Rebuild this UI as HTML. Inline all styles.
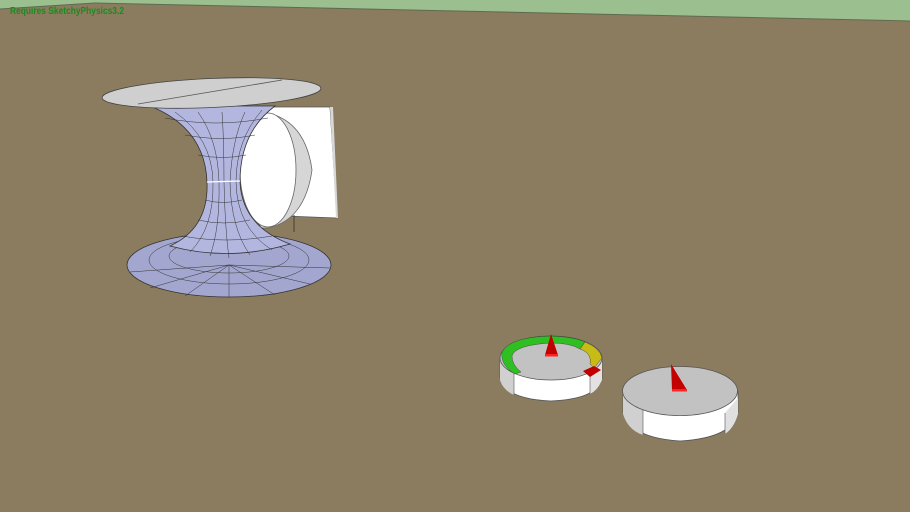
<!DOCTYPE html>
<html><head><meta charset="utf-8"><style>
html,body{margin:0;padding:0;width:910px;height:512px;overflow:hidden;background:#8b7c5f}
svg{display:block}
</style></head><body>
<svg width="910" height="512" viewBox="0 0 910 512" xmlns="http://www.w3.org/2000/svg">
<rect width="910" height="512" fill="#8b7c5f"/>
<polygon points="0,0 910,0 910,21 95,3 0,9" fill="#9bbf8f"/>
<polyline points="0,9 95,3 910,21" fill="none" stroke="#5e6b50" stroke-width="1"/>
<text x="10" y="14" font-family="Liberation Sans, sans-serif" font-weight="bold" font-size="10" fill="#1d8a1d" textLength="114" lengthAdjust="spacingAndGlyphs">Requires SketchyPhysics3.2</text>

<!-- panel -->
<polygon points="262,107 330,107 337,218 285,216" fill="#ffffff" stroke="#555" stroke-width="0.8"/>
<polygon points="330,107 333,107 338,218 336,218" fill="#d8d8d8"/>
<line x1="294" y1="215" x2="294" y2="232" stroke="#4a4030" stroke-width="1"/>
<!-- disc rim -->
<path d="M262,112 Q305,118 312,170 Q305,220 268,228 L260,228 L262,112 Z" fill="#d6d6d6" stroke="#666" stroke-width="0.8"/>
<ellipse cx="268" cy="170" rx="28" ry="57" fill="#ffffff" stroke="#666" stroke-width="0.8"/>

<!-- base -->
<ellipse cx="229" cy="265" rx="102" ry="32" fill="#a3a7cf" stroke="#333" stroke-width="0.8"/>
<ellipse cx="229" cy="260" rx="80" ry="24" fill="none" stroke="#333" stroke-width="0.5"/>
<ellipse cx="229" cy="256" rx="60" ry="17" fill="none" stroke="#333" stroke-width="0.5"/>
<g stroke="#333" stroke-width="0.5">
<line x1="229" y1="265" x2="130" y2="272"/><line x1="229" y1="265" x2="150" y2="288"/><line x1="229" y1="265" x2="185" y2="296"/>
<line x1="229" y1="265" x2="229" y2="297"/><line x1="229" y1="265" x2="275" y2="295"/><line x1="229" y1="265" x2="310" y2="284"/><line x1="229" y1="265" x2="330" y2="268"/>
</g>
<!-- body -->
<path d="M150,106 Q205,128 207,182 Q209,228 170,246 Q229,262 290,244 Q242,226 240,182 Q240,132 275,106 Z" fill="#b3b7e0" stroke="#333" stroke-width="0.8"/>
<g stroke="#333" stroke-width="0.5" fill="none">
<path d="M175,112 Q212,138 213,182 Q214,228 190,252"/>
<path d="M198,112 Q218,140 219,182 Q220,228 210,256"/>
<path d="M222,112 Q224,140 224,182 Q225,228 229,258"/>
<path d="M245,112 Q232,140 230,182 Q231,228 250,255"/>
<path d="M262,110 Q236,140 236,182 Q237,228 272,250"/>
<path d="M165,118 Q215,128 268,118"/>
<path d="M185,135 Q222,142 255,135"/>
<path d="M198,155 Q223,160 246,155"/>
<path d="M205,200 Q223,205 242,200"/>
<path d="M198,220 Q224,226 250,220"/>
<path d="M182,236 Q226,244 272,236"/>
</g>
<line x1="207" y1="182" x2="240" y2="181" stroke="#fff" stroke-width="1.2"/>
<!-- top disc -->
<ellipse cx="211.5" cy="93" rx="109.5" ry="14.5" transform="rotate(-2.5 211.5 93)" fill="#cfcfcf" stroke="#444" stroke-width="0.8"/>
<line x1="138" y1="104" x2="282" y2="80" stroke="#555" stroke-width="0.8"/>

<!-- gauge 1 -->
<path d="M500,358 L500,378 Q505,399 551,401 Q598,399 602,378 L602,358 Z" fill="#ffffff" stroke="#555" stroke-width="0.8"/>
<path d="M500,360 L500,380 Q503,390 514,395 L514,374 Z" fill="#d0d0d0"/>
<path d="M602,360 L602,380 Q598,390 590,394 L590,374 Z" fill="#e2e2e2"/>
<line x1="514" y1="372" x2="514" y2="395" stroke="#555" stroke-width="0.6"/>
<line x1="590" y1="374" x2="590" y2="394" stroke="#555" stroke-width="0.6"/>
<ellipse cx="551" cy="358" rx="51" ry="22" fill="#c2c2c2" stroke="#555" stroke-width="0.8"/>
<path d="M515,374 Q500,365 502,352 Q510,337 551,336 Q575,337 585,342 L580,349 Q570,343 551,343 Q515,345 512,356 Q512,365 521,372 Z" fill="#2fbf22" stroke="#333" stroke-width="0.4"/>
<path d="M585,342 Q600,348 602,358 L594,368 L590,364 Q592,353 580,349 Z" fill="#c7bb16" stroke="#333" stroke-width="0.4"/>
<path d="M594,366 L601,370 L590,377 L583,371 Z" fill="#c00000"/>
<polygon points="551,334 545,355 558,355" fill="#c20000"/>
<rect x="545" y="354" width="13" height="2.5" fill="#ff2222"/>

<!-- gauge 2 -->
<path d="M623,391 L623,412 Q630,438 680,441 Q733,438 738,412 L738,391 Z" fill="#ffffff" stroke="#555" stroke-width="0.8"/>
<path d="M623,393 L623,414 Q628,430 643,435 L643,410 Z" fill="#d0d0d0"/>
<path d="M738,398 L738,414 Q734,428 725,434 L725,413 Z" fill="#e0e0e0"/>
<line x1="643" y1="410" x2="643" y2="435" stroke="#555" stroke-width="0.6"/>
<line x1="725" y1="413" x2="725" y2="434" stroke="#555" stroke-width="0.6"/>
<ellipse cx="680" cy="391" rx="57.5" ry="24.5" fill="#c2c2c2" stroke="#555" stroke-width="0.8"/>
<polygon points="671,364 672,390 687,390" fill="#c20000"/>
<rect x="672" y="389" width="15" height="2.5" fill="#ff2222"/>
</svg>
</body></html>
